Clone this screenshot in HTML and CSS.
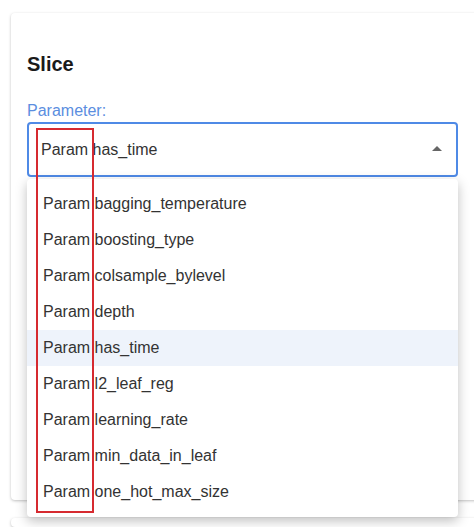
FILE: index.html
```html
<!DOCTYPE html>
<html>
<head>
    <title>Slice</title>
    <meta name="viewport" content="width=device-width, initial-scale=1">
    <link rel="stylesheet" href="styles.css">
</head>
<body>
    <div class="card">
        <h3 class="title">Slice</h3>
        <div class="label">Parameter:</div>
        <div class="field">
            <div class="select">
                <span>Param has_time</span>
                <svg class="arrow" width="10" height="5" viewBox="0 0 10 5"><path d="M0 5 L5 0 L10 5 Z" fill="#666"/></svg>
            </div>
            <ul class="menu">
                <li>Param bagging_temperature</li>
                <li>Param boosting_type</li>
                <li>Param colsample_bylevel</li>
                <li>Param depth</li>
                <li class="active">Param has_time</li>
                <li>Param l2_leaf_reg</li>
                <li>Param learning_rate</li>
                <li>Param min_data_in_leaf</li>
                <li>Param one_hot_max_size</li>
            </ul>
            <div class="mark"></div>
        </div>
    </div>
    <div class="card next"></div>
</body>
</html>
```

FILE: styles.css
```css
html, body {
    overflow: hidden;
}
body {
    font-family: "Liberation Sans", Arial, sans-serif;
    margin: 0;
    padding: 13px 0 0 11px;
    background: #fff;
}
.card {
    width: 480px;
    height: 487px;
    box-sizing: border-box;
    padding: 39px 16px 0;
    background: #fff;
    border-radius: 4px;
    box-shadow: 0 1px 3px rgba(0,0,0,0.25);
}
.card.next {
    height: 9px;
    margin-top: 18px;
    padding: 0;
}
.title {
    margin: 0;
    font-size: 20px;
    line-height: 24px;
    font-weight: bold;
    color: #1a1a1a;
}
.label {
    margin-top: 26px;
    font-size: 16px;
    line-height: 18px;
    color: #5b8ee0;
}
.field {
    position: relative;
    margin-top: 2px;
    width: 431px;
}
.select {
    height: 55px;
    box-sizing: border-box;
    border: 2px solid #4f8ae6;
    border-radius: 4px;
    padding: 0 14px 0 12px;
    display: flex;
    align-items: center;
    justify-content: space-between;
    font-size: 16px;
    color: #333;
}
.arrow {
    margin-top: -2px;
}
.menu {
    position: absolute;
    top: 57px;
    left: 0;
    right: 0;
    margin: 0;
    padding: 7px 0 7px;
    list-style: none;
    background: #fff;
    border-radius: 4px;
    box-shadow: 0 4px 12px rgba(0,0,0,0.25);
    z-index: 2;
}
.menu li {
    height: 36px;
    line-height: 36px;
    padding-left: 16px;
    font-size: 16px;
    color: #333;
}
.menu li.active {
    background: #eef3fb;
}
.mark {
    position: absolute;
    left: 9px;
    top: 6px;
    width: 58px;
    height: 385px;
    box-sizing: border-box;
    border: 2px solid #d62a30;
    z-index: 3;
}
```
